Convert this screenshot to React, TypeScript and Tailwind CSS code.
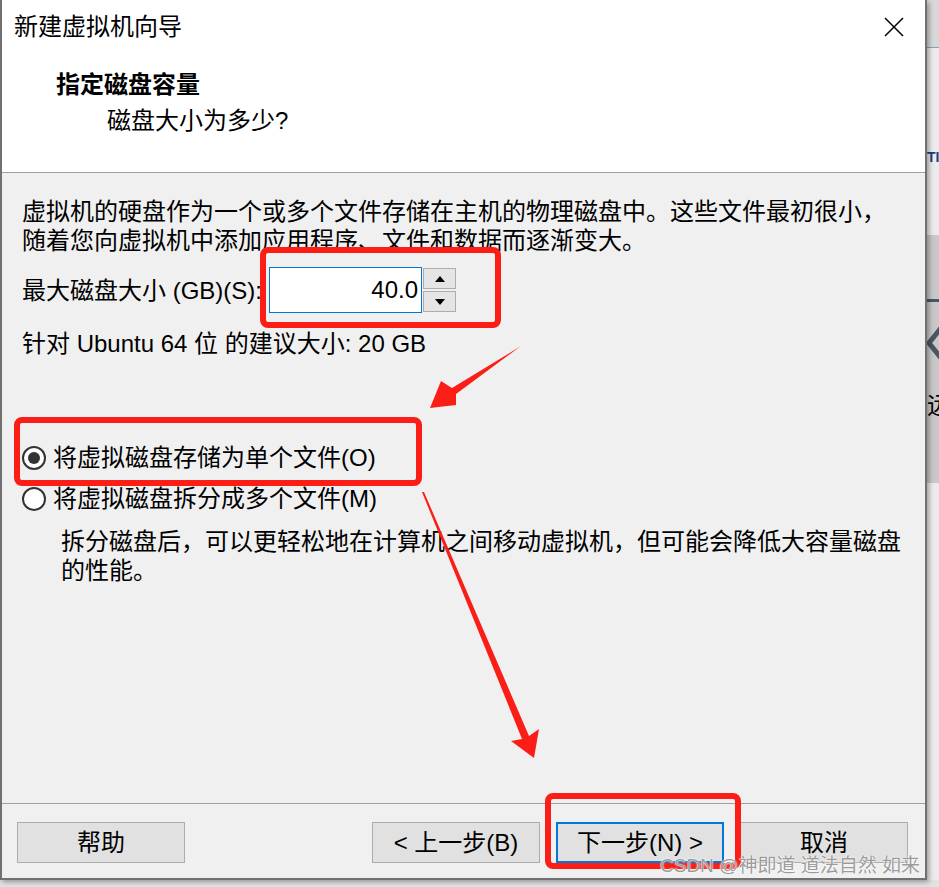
import React from 'react';

const FONT = { fontFamily: '"Liberation Sans", "Noto Sans CJK SC", sans-serif' };

const SpinButton = ({ up }: { up?: boolean }) => (
  <div className="h-[21px] w-[33px] border border-[#adadad] bg-[#e5e5e5] flex items-center justify-center">
    <svg width="10" height="6" viewBox="0 0 10 6">
      {up ? <polygon points="0,6 10,6 5,0" fill="#000" /> : <polygon points="0,0 10,0 5,6" fill="#000" />}
    </svg>
  </div>
);

const Radio = ({ checked, label }: { checked?: boolean; label: string }) => (
  <div className="flex items-center h-[36px]">
    <div className="w-[24px] h-[24px] rounded-full border-2 border-[#333] bg-white flex items-center justify-center">
      {checked && <div className="w-[12px] h-[12px] rounded-full bg-[#333]" />}
    </div>
    <span className="ml-[7px] text-[24px] leading-[36px]">{label}</span>
  </div>
);

const Button = ({ label, active }: { label: string; active?: boolean }) => (
  <div
    className={`w-[168px] h-[41px] bg-[#e1e1e1] flex items-center justify-center text-[24px] ${
      active ? 'border-2 border-[#0078d7]' : 'border border-[#adadad]'
    }`}
  >
    {label}
  </div>
);

const Annotations = () => (
  <svg className="absolute inset-0 z-20 pointer-events-none" width="939" height="887" viewBox="0 0 939 887">
    <g fill="none" stroke="#fa1e17" strokeWidth="6">
      <rect x="263" y="250" width="235" height="75" rx="5" />
      <rect x="17" y="420" width="402" height="63" rx="5" />
      <rect x="548" y="796" width="190" height="70" rx="5" />
    </g>
    <g fill="#fa1e17">
      {/* arrow toward the single-file option */}
      <polygon points="521,346 456,394 456,405 430,408 441,381 452,388" />
      {/* arrow toward the next button */}
      <polygon points="422,492 424,492 529,736 539,729 534,758 511,741 522,739" />
    </g>
  </svg>
);

const BackgroundStrip = () => (
  <div className="w-[12px] h-[880px] flex flex-col overflow-hidden">
    <div className="h-[47px] bg-[#d8d8d8]" />
    <div className="h-px bg-[#86a3b8]" />
    <div className="h-[187px] bg-[#ececec] pt-[101px]">
      <span className="block text-[14px] font-bold leading-[16px] text-[#1e3c7c]" style={FONT}>TI</span>
    </div>
    <div className="h-[248px] bg-[#c8c8c8] flex flex-col pt-[64px]">
      <div className="h-[3px] bg-[#4b5663]" />
      <svg width="12" height="40" viewBox="0 0 12 40" className="mt-[22px]">
        <polyline points="14,4 2,19 14,34" fill="none" stroke="#4b5663" strokeWidth="5" />
      </svg>
      <span className="mt-[27px] text-[24px] leading-[30px] whitespace-nowrap text-black" style={FONT}>远</span>
    </div>
    <div className="flex-1 bg-[#ebebeb]" />
  </div>
);

export default function App() {
  return (
    <div className="relative w-[939px] h-[887px] overflow-hidden bg-[#e2e2e2] text-black" style={FONT}>
      <div className="flex">
        <div className="w-[927px] h-[880px] flex flex-col border-l-2 border-r-2 border-b-2 border-[#717171] shadow-[2px_2px_5px_rgba(0,0,0,0.35)] relative z-10">
          {/* title bar */}
          <div className="h-[54px] bg-white flex items-center justify-between pl-[12px] pr-[21px]">
            <span className="text-[24px] leading-[30px]">新建虚拟机向导</span>
            <svg width="20" height="20" viewBox="0 0 20 20">
              <path d="M1 1 L19 19 M19 1 L1 19" stroke="#000" strokeWidth="1.5" />
            </svg>
          </div>

          {/* header */}
          <div className="h-[119px] bg-white border-b border-[#a0a0a0] pt-[13px] pl-[54px]">
            <div className="text-[24px] leading-[36px] font-bold">指定磁盘容量</div>
            <div className="text-[24px] leading-[36px] pl-[51px]">磁盘大小为多少?</div>
          </div>

          {/* body */}
          <div className="flex-1 bg-[#f0f0f0] pl-[20px] pt-[24px] text-[24px]">
            <p className="leading-[29px]">
              虚拟机的硬盘作为一个或多个文件存储在主机的物理磁盘中。这些文件最初很小，
              <br />
              随着您向虚拟机中添加应用程序、文件和数据而逐渐变大。
            </p>

            <div className="flex items-center mt-[12px] h-[46px]">
              <span className="w-[247px] leading-[29px] whitespace-nowrap">最大磁盘大小 (GB)(S):</span>
              <div className="w-[153px] h-[46px] border border-[#0078d7] bg-white flex items-center justify-end pr-[3px]">
                40.0
              </div>
              <div className="flex flex-col gap-[2px] ml-px">
                <SpinButton up />
                <SpinButton />
              </div>
            </div>

            <p className="mt-[16px] leading-[29px]">针对 Ubuntu 64 位 的建议大小: 20 GB</p>

            <div className="mt-[82px] flex flex-col gap-[5px]">
              <Radio checked label="将虚拟磁盘存储为单个文件(O)" />
              <Radio label="将虚拟磁盘拆分成多个文件(M)" />
            </div>

            <p className="mt-[10px] pl-[39px] leading-[29px]">
              拆分磁盘后，可以更轻松地在计算机之间移动虚拟机，但可能会降低大容量磁盘
              <br />
              的性能。
            </p>
          </div>

          {/* button bar */}
          <div className="h-[75px] bg-[#f0f0f0] border-t border-[#a0a0a0] flex items-start pt-[18px] pl-[15px] pr-[17px]">
            <Button label="帮助" />
            <div className="flex-1" />
            <div className="flex gap-[16px]">
              <Button label="< 上一步(B)" />
              <Button label="下一步(N) >" active />
              <Button label="取消" />
            </div>
          </div>
        </div>
        <BackgroundStrip />
      </div>

      <Annotations />

      <span
        className="absolute left-[660px] top-[854px] z-30 text-[19px] leading-[24px] whitespace-nowrap text-[#9b9b9b] [text-shadow:0_0_2px_#fff,0_0_1px_#fff]"
        style={FONT}
      >
        CSDN @神即道 道法自然 如来
      </span>
    </div>
  );
}
